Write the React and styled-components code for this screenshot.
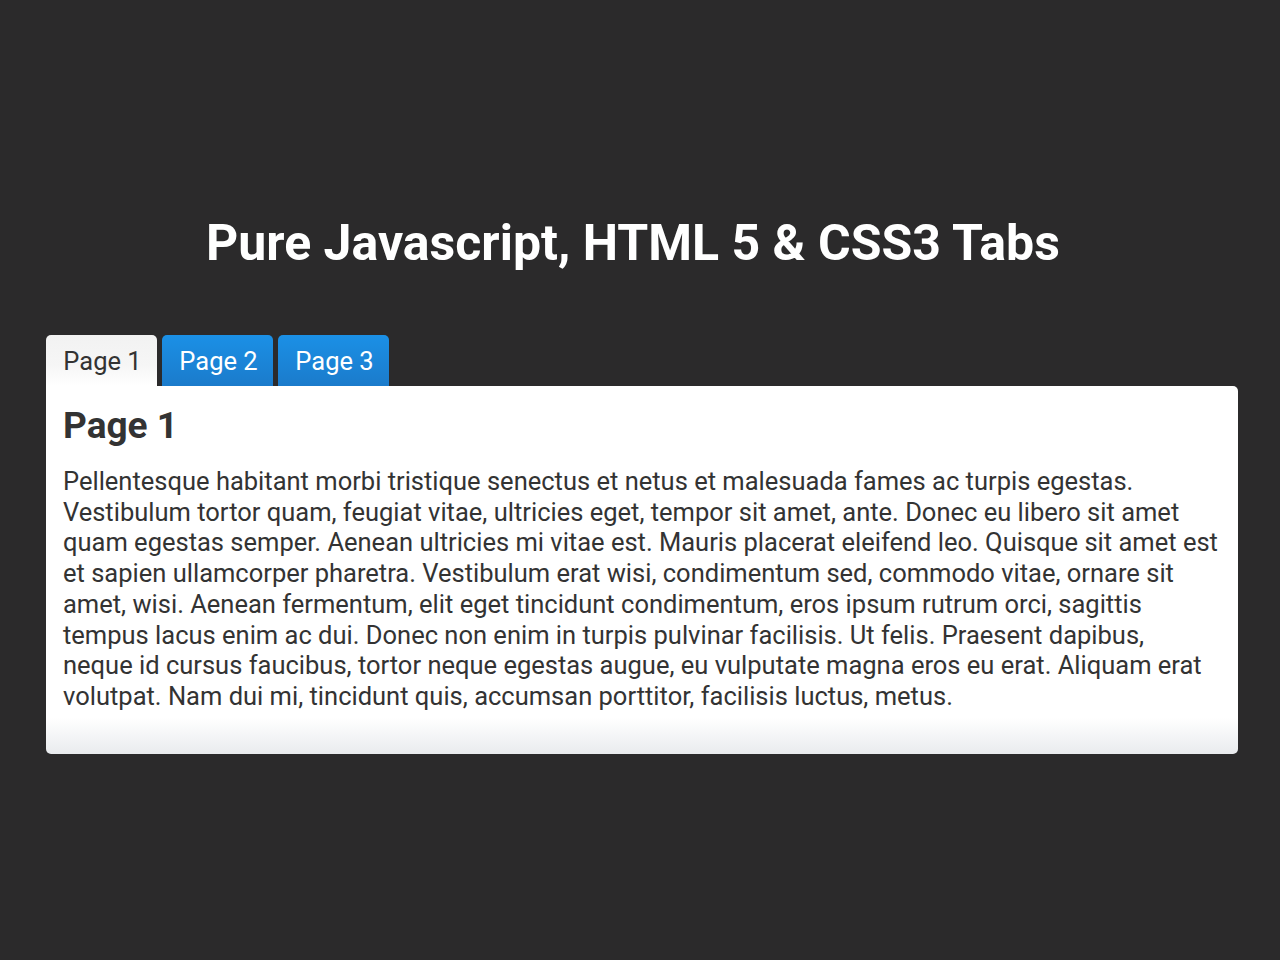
import { useState } from "react";
import styled, { createGlobalStyle } from "styled-components";

const GlobalStyle = createGlobalStyle`
  html, body {
    margin: 0;
    padding: 0;
    background: #2b2a2b;
    font-family: Roboto, "Liberation Sans", sans-serif;
  }
`;

const pages = [
  {
    title: "Page 1",
    text: "Pellentesque habitant morbi tristique senectus et netus et malesuada fames ac turpis egestas. Vestibulum tortor quam, feugiat vitae, ultricies eget, tempor sit amet, ante. Donec eu libero sit amet quam egestas semper. Aenean ultricies mi vitae est. Mauris placerat eleifend leo. Quisque sit amet est et sapien ullamcorper pharetra. Vestibulum erat wisi, condimentum sed, commodo vitae, ornare sit amet, wisi. Aenean fermentum, elit eget tincidunt condimentum, eros ipsum rutrum orci, sagittis tempus lacus enim ac dui. Donec non enim in turpis pulvinar facilisis. Ut felis. Praesent dapibus, neque id cursus faucibus, tortor neque egestas augue, eu vulputate magna eros eu erat. Aliquam erat volutpat. Nam dui mi, tincidunt quis, accumsan porttitor, facilisis luctus, metus.",
  },
  {
    title: "Page 2",
    text: "Vestibulum tortor quam, feugiat vitae, ultricies eget, tempor sit amet, ante. Donec eu libero sit amet quam egestas semper.",
  },
  {
    title: "Page 3",
    text: "Aenean ultricies mi vitae est. Mauris placerat eleifend leo. Quisque sit amet est et sapien ullamcorper pharetra.",
  },
];

export default function App() {
  const [current, setCurrent] = useState(0);
  const page = pages[current];

  return (
    <>
      <GlobalStyle />
      <Page>
        <Title>Pure Javascript, HTML 5 &amp; CSS3 Tabs</Title>
        <Tabs>
          <TabList>
            {pages.map((p, i) => (
              <Tab key={p.title} $active={i === current} onClick={() => setCurrent(i)}>
                {p.title}
              </Tab>
            ))}
          </TabList>
          <Panel>
            <PanelTitle>{page.title}</PanelTitle>
            <PanelText>{page.text}</PanelText>
          </Panel>
        </Tabs>
      </Page>
    </>
  );
}

/********************* styled components *************************/
const Page = styled.div`
  min-height: 960px;
  padding: 213px 42px 0 46px;
  box-sizing: border-box;
`;

const Title = styled.h1`
  margin: 0 0 61px;
  text-align: center;
  color: #fff;
  font-size: 50px;
  font-weight: 700;
  line-height: 61px;
  padding-right: 18px;
`;

const Tabs = styled.div`
  display: flex;
  flex-direction: column;
`;

const TabList = styled.div`
  display: flex;
  gap: 5px;
  align-items: flex-end;
`;

const Tab = styled.button`
  width: 111px;
  height: 51px;
  padding: 0 0 0 2px;
  border: none;
  border-radius: 5px 5px 0 0;
  font-family: Roboto, "Liberation Sans", sans-serif;
  font-size: 25.5px;
  cursor: pointer;
  color: ${(p) => (p.$active ? "#333" : "#fff")};
  background: ${(p) =>
    p.$active
      ? "linear-gradient(#f2f2f2, #f6f6f6 60%, #ffffff)"
      : "linear-gradient(#1b90e6, #1b7bcb)"};
`;

const Panel = styled.div`
  background: linear-gradient(to bottom, #fff calc(100% - 36px), #e9ebee);
  border-radius: 0 5px 5px 5px;
  padding: 16px 19px 42px 17px;
  color: #333;
`;

const PanelTitle = styled.h2`
  margin: 0 0 16px;
  font-size: 37px;
  font-weight: 700;
  line-height: 48px;
`;

const PanelText = styled.p`
  margin: 0;
  font-size: 25.5px;
  line-height: 30.7px;
`;
